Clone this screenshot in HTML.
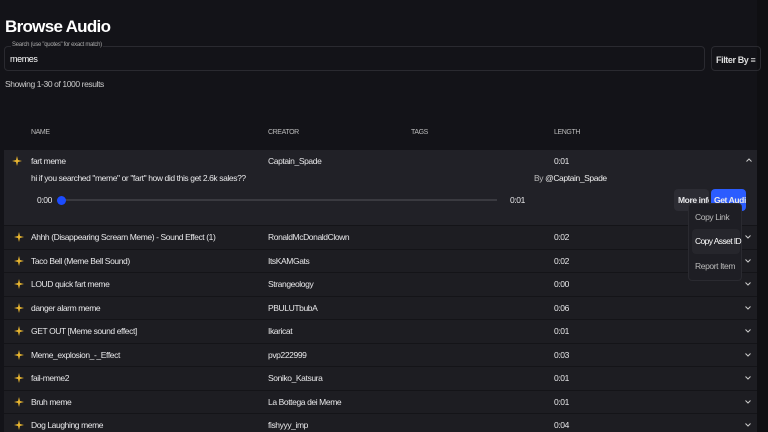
<!DOCTYPE html>
<html><head><meta charset="utf-8"><style>
*{box-sizing:border-box;margin:0;padding:0}
html,body{width:768px;height:432px;overflow:hidden}
body{background:#131318;color:#e8e8ea;font-family:"Liberation Sans",sans-serif;font-size:8.5px;letter-spacing:-0.4px;position:relative}
.abs{position:absolute;white-space:nowrap}
h1{position:absolute;left:5px;top:17px;font-size:17px;font-weight:bold;letter-spacing:-0.7px;color:#fff}
.search{left:4px;top:46px;width:701px;height:25px;border:1px solid #2a2a30;border-radius:4px}
.search .lbl{position:absolute;left:6px;top:-5px;font-size:6px;color:#aaa;background:#131318;padding:0 1px;letter-spacing:-0.3px}
.search .v{position:absolute;left:5px;top:7px;font-size:9px;color:#fff}
.filter{left:711px;top:46px;width:50px;height:25px;border:1px solid #2a2a30;border-radius:4px;font-size:9px;font-weight:bold;padding:8px 0 0 4px;color:#ddd}
.hdr{top:129px;font-size:7px;color:#bbb}
.tbl{left:4px;top:150px;width:753px;height:282px;background:#1d1d22}
.row{position:absolute;left:4px;width:753px;height:23.5px;border-top:1px solid #141418}
.row span{position:absolute;top:6px;white-space:nowrap}
.star{position:absolute;left:10px;top:6px}
.chev{position:absolute;left:741px;top:9px}
.right{left:757px;top:0;width:11px;height:432px;background:#0f0f12}
</style></head><body>
<div class="abs right"></div>
<h1>Browse Audio</h1>
<div class="abs search"><span class="lbl">Search (use "quotes" for exact match)</span><span class="v">memes</span></div>
<div class="abs filter">Filter By <span style="font-weight:normal">&#8801;</span></div>
<div class="abs" style="left:5px;top:79px;font-size:8.5px;color:#ccc">Showing 1-30 of 1000 results</div>
<div class="abs hdr" style="left:31px">NAME</div>
<div class="abs hdr" style="left:268px">CREATOR</div>
<div class="abs hdr" style="left:411px">TAGS</div>
<div class="abs hdr" style="left:554px">LENGTH</div>
<div class="abs tbl"></div>
<div class="abs" style="left:4px;top:150px;width:753px;height:75px;background:#212127"></div>
<svg class="abs" style="left:12px;top:156px" width="10" height="10" viewBox="0 0 10 10"><path d="M5 0 L6 4 L10 5 L6 6 L5 10 L4 6 L0 5 L4 4Z" fill="#e8b530"/></svg>
<div class="abs" style="left:31px;top:156px">fart meme</div>
<div class="abs" style="left:268px;top:156px">Captain_Spade</div>
<div class="abs" style="left:554px;top:156px">0:01</div>
<svg class="abs" style="left:746px;top:158px" width="6" height="4" viewBox="0 0 6 4"><path d="M0.5 3.5 L3 1 L5.5 3.5" stroke="#ccc" fill="none"/></svg>
<div class="abs" style="left:31px;top:173px">hi if you searched "meme" or "fart" how did this get 2.6k sales??</div>
<div class="abs" style="left:534px;top:173px;color:#bbb">By <span style="color:#eee">@Captain_Spade</span></div>
<div class="abs" style="left:37px;top:195px">0:00</div>
<div class="abs" style="left:62px;top:199px;width:435px;height:2px;background:#3a3a40"></div>
<div class="abs" style="left:57px;top:196px;width:9px;height:9px;border-radius:50%;background:#1c4cff"></div>
<div class="abs" style="left:510px;top:195px">0:01</div>
<div class="abs" style="left:674px;top:189px;width:35px;height:22px;background:#2c2c33;border-radius:4px;font-weight:bold;padding:6px 0 0 4px;overflow:hidden">More info</div>
<div class="abs" style="left:711px;top:189px;width:35px;height:22px;background:#2b5cff;border-radius:4px;font-weight:bold;padding:6px 0 0 3px;overflow:hidden">Get Audio</div>
<div id="rows"></div>
<div class="abs" style="left:688px;top:203px;width:54px;height:78px;background:#1e1e24;border:1px solid #2a2a30;border-radius:4px"></div>
<div class="abs" style="left:692px;top:229px;width:48px;height:25px;background:#26262c;border-radius:4px"></div>
<div class="abs" style="left:695px;top:212px;color:#bbb">Copy Link</div>
<div class="abs" style="left:695px;top:236px;color:#fff;letter-spacing:-0.6px">Copy Asset ID</div>
<div class="abs" style="left:695px;top:261px;color:#bbb">Report Item</div>
<script>
var d=[["Ahhh (Disappearing Scream Meme) - Sound Effect (1)","RonaldMcDonaldClown","0:02"],["Taco Bell (Meme Bell Sound)","ItsKAMGats","0:02"],["LOUD quick fart meme","Strangeology","0:00"],["danger alarm meme","PBULUTbubA","0:06"],["GET OUT [Meme sound effect]","Ikaricat","0:01"],["Meme_explosion_-_Effect","pvp222999","0:03"],["fail-meme2","Soniko_Katsura","0:01"],["Bruh meme","La Bottega dei Meme","0:01"],["Dog Laughing meme","fishyyy_imp","0:04"]];
var h="";d.forEach(function(r,i){var t=225+i*23.5;h+='<div class="row" style="top:'+t+'px"><svg class="star" width="10" height="10" viewBox="0 0 10 10"><path d="M5 0 L6 4 L10 5 L6 6 L5 10 L4 6 L0 5 L4 4Z" fill="#e8b530"/></svg><span style="left:27px">'+r[0]+'</span><span style="left:264px">'+r[1]+'</span><span style="left:550px">'+r[2]+'</span><svg class="chev" width="6" height="4" viewBox="0 0 6 4"><path d="M0.5 0.5 L3 3 L5.5 0.5" stroke="#ccc" fill="none"/></svg></div>';});
document.getElementById("rows").innerHTML=h;
</script>
</body></html>
